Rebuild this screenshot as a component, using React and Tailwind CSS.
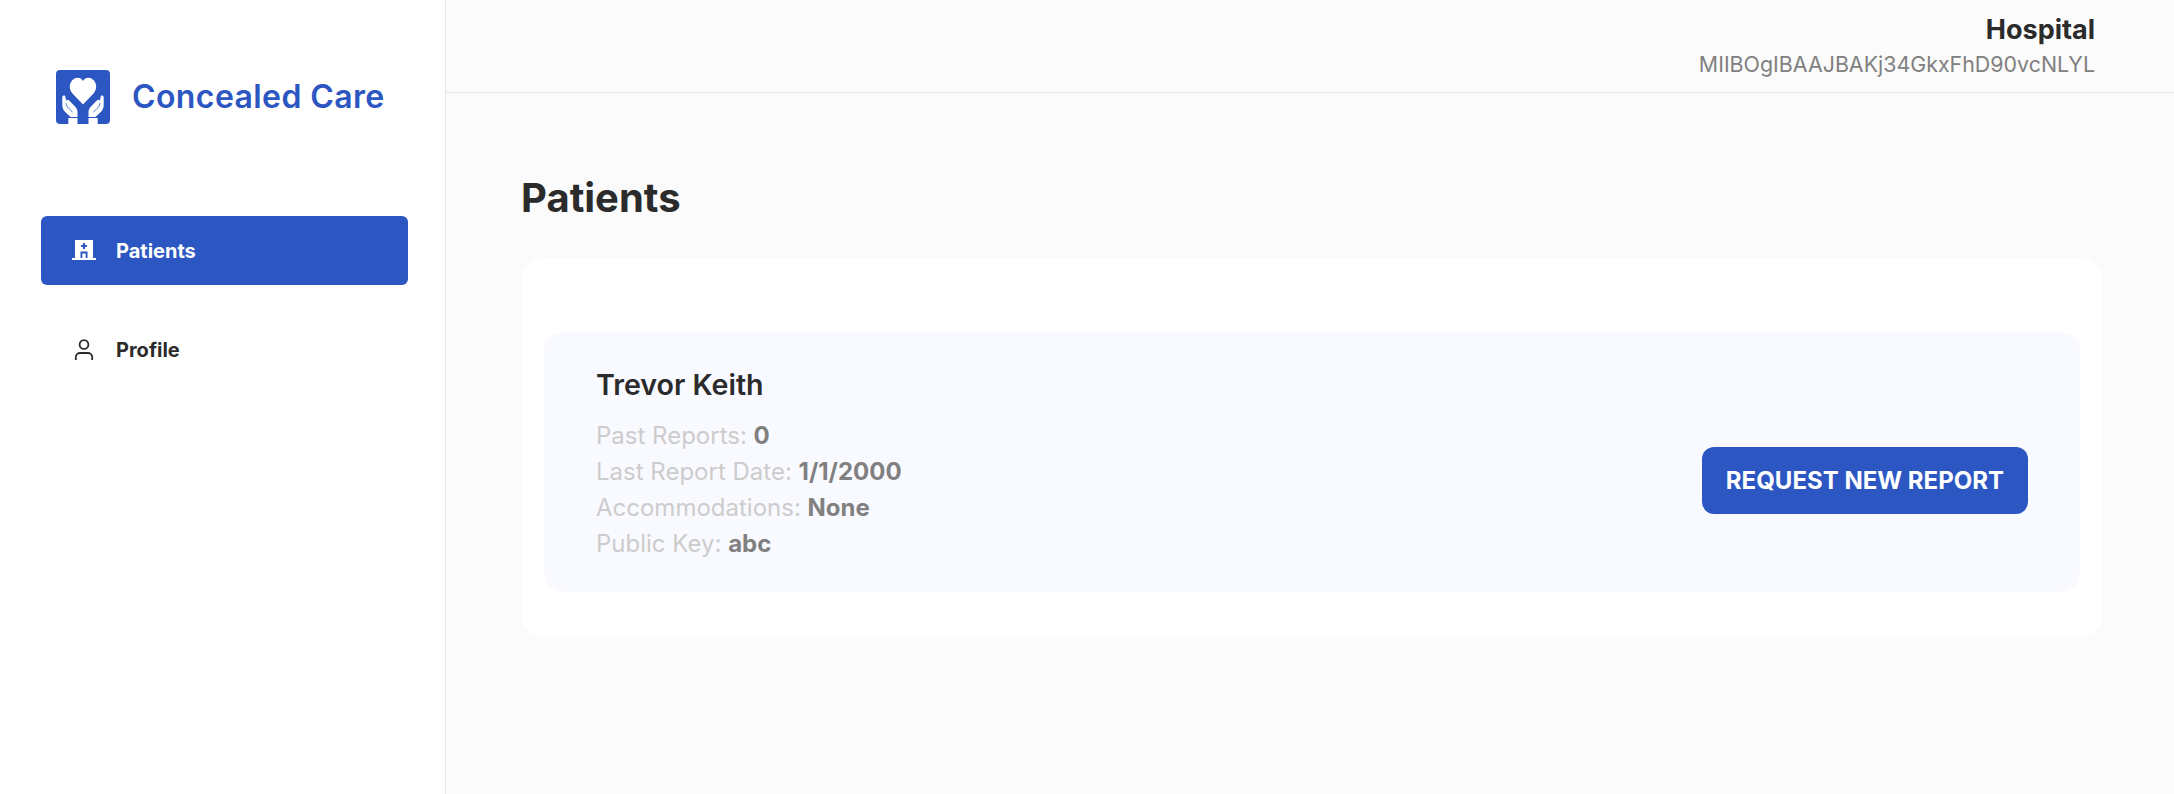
const FONT = "font-['Inter',sans-serif]";

const HAND = "M6.3 27.5 C6.5 25 9 25 9.4 27 L10 30.5 C11 29.3 12.3 29.5 13.2 30.5 L19 36.5 C20.8 38.4 21.5 39.8 21.5 42 L21.5 47 L14.5 47 L8.7 41.5 C7 39.5 6.3 37.5 6.3 35 Z";
const HAND_LINE = "M10 33 C10.3 36 12 38 16.5 42";

const LogoMark = () => (
  <svg width="54" height="54" viewBox="0 0 54 54" className="shrink-0">
    <rect width="54" height="54" rx="4" fill="#2c56c2" />
    <path d="M27 34.5 L16.5 23.5 C12.5 18.5 13 12.5 17.5 9.2 C21 6.8 25 7.8 27 11 C29 7.8 33 6.8 36.5 9.2 C41 12.5 41.5 18.5 37.5 23.5 Z" fill="#fff" />
    <g>
      <path d={HAND} fill="#fff" />
      <path d={HAND_LINE} fill="none" stroke="#2c56c2" strokeWidth="0.8" />
    </g>
    <g transform="matrix(-1 0 0 1 54 0)">
      <path d={HAND} fill="#fff" />
      <path d={HAND_LINE} fill="none" stroke="#2c56c2" strokeWidth="0.8" />
    </g>
    <rect x="12.3" y="48" width="9.2" height="6" fill="#fff" />
    <rect x="32.5" y="48" width="9.2" height="6" fill="#fff" />
  </svg>
);

const HospitalIcon = () => (
  <svg width="24" height="21" viewBox="0 0 24 21" className="shrink-0">
    <path d="M3 0 H21 V18 H3 Z" fill="#fff" />
    <rect x="0" y="18" width="24" height="2" fill="#fff" />
    <path d="M11 3 H13 V5 H15 V7 H13 V9 H11 V7 H9 V5 H11 Z" fill="#2c56c2" />
    <path d="M8.5 18 V11.5 H15.5 V18 H13.7 V13.5 H10.3 V18 Z" fill="#2c56c2" />
  </svg>
);

const ProfileIcon = () => (
  <svg width="24" height="24" viewBox="0 0 24 24" fill="none" stroke="#2b2b2b" strokeWidth="1.8" className="shrink-0">
    <circle cx="12" cy="6.5" r="4.4" />
    <path d="M3.8 22 V19 C3.8 16.5 5.8 15 8 15 H16 C18.2 15 20.2 16.5 20.2 19 V22" />
  </svg>
);

const NAV_ITEMS = [
  { label: "Patients", icon: HospitalIcon, active: true },
  { label: "Profile", icon: ProfileIcon, active: false },
];

const PATIENT_FIELDS = [
  ["Past Reports:", "0"],
  ["Last Report Date:", "1/1/2000"],
  ["Accommodations:", "None"],
  ["Public Key:", "abc"],
];

export default function App() {
  return (
    <div className={`flex h-[794px] overflow-hidden bg-[#fbfbfb] text-[#2b2b2b] ${FONT}`}>
      <aside className="flex w-[446px] shrink-0 flex-col border-r border-[#e6e6e6] bg-white pl-[41px] pr-[37px]">
        <div className="flex items-center gap-[22px] pl-[15px] pt-[70px]">
          <LogoMark />
          <span className="text-[32px] font-semibold leading-[54px] tracking-[0.4px] text-[#2c56c2]">Concealed Care</span>
        </div>
        <nav className="mt-[92px] flex flex-col gap-[30px]">
          {NAV_ITEMS.map(({ label, icon: Icon, active }) => (
            <div
              key={label}
              className={`flex h-[69px] items-center gap-[20px] rounded-[6px] pl-[31px] text-[20px] font-bold ${active ? "bg-[#2c56c2] text-white" : "text-[#2b2b2b]"}`}
            >
              <span className="flex w-[24px] justify-center"><Icon /></span>
              {label}
            </div>
          ))}
        </nav>
      </aside>

      <div className="flex min-w-0 flex-1 flex-col">
        <header className="flex h-[93px] flex-col items-end border-b border-[#e6e6e6] pr-[79px] pt-[12px]">
          <div className="text-[27px] font-bold leading-[36px]">Hospital</div>
          <div className="text-[21.4px] leading-[32px] text-[#808080]">MIIBOgIBAAJBAKj34GkxFhD90vcNLYL</div>
        </header>
        <main className="pl-[75px] pr-[71px] pt-[81px]">
          <h1 className="text-[40px] font-bold leading-[48px]">Patients</h1>
          <section className="mt-[36px] rounded-[24px] bg-white px-[23px] pb-[45px] pt-[74px]">
            <div className="flex items-center justify-between rounded-[20px] bg-[#f9faff] pb-[30px] pl-[52px] pr-[52px] pt-[33px]">
              <div>
                <h2 className="text-[28.6px] font-semibold leading-[40px]">Trevor Keith</h2>
                <div className="mt-[13px] text-[24px] leading-[36px] text-[#cccccc]">
                  {PATIENT_FIELDS.map(([label, value]) => (
                    <div key={label}>{label} <span className="font-bold text-[#808080]">{value}</span></div>
                  ))}
                </div>
              </div>
              <button className="mt-[34px] h-[67px] rounded-[12px] bg-[#2c56c2] px-[24px] text-[24px] font-bold text-white">REQUEST NEW REPORT</button>
            </div>
          </section>
        </main>
      </div>
    </div>
  );
}
